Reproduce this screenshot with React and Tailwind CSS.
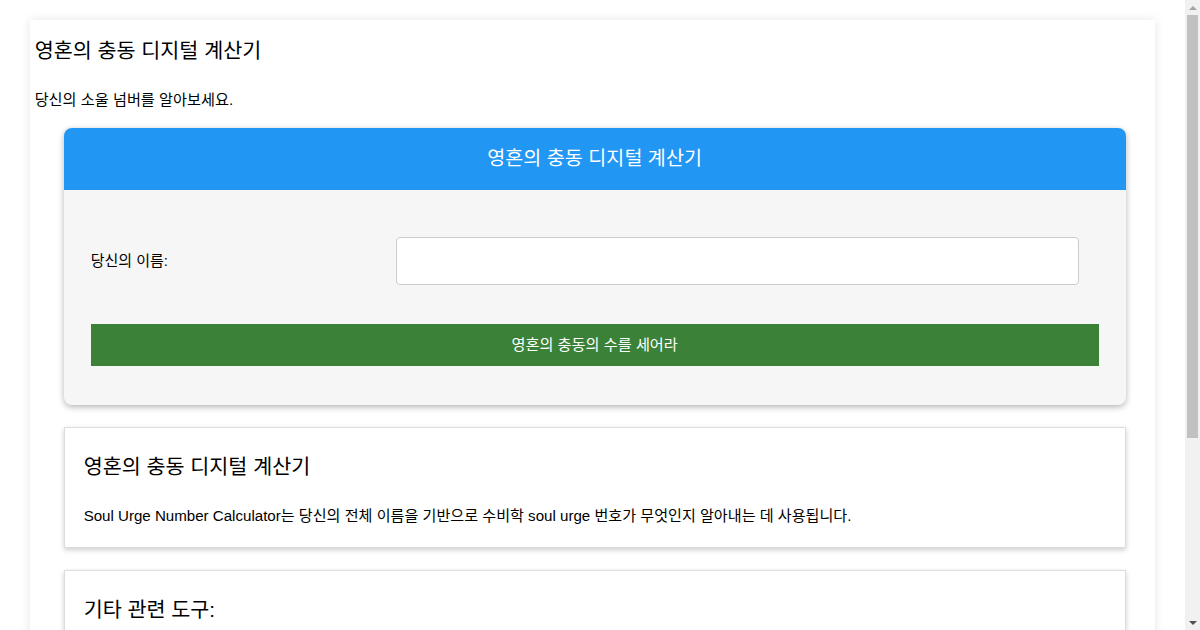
export default function App() {
  return (
    <div className="flex h-screen overflow-hidden bg-white" style={{ fontFamily: '"Liberation Sans", "Noto Sans CJK KR", sans-serif' }}>
      <div className="flex-1 min-w-0 h-screen overflow-hidden">
        <div className="pt-5 pb-10">
          <div className="w-[95%] mx-auto bg-white shadow-[0_0_10px_rgba(0,0,0,0.1)] px-[5px] pb-10 text-black">
            <h1 className="text-[20.7px] leading-[24px] pt-[19px] mb-[28px]">영혼의 충동 디지털 계산기</h1>
            <p className="text-[15.2px] leading-[18px] mb-[19px]">당신의 소울 넘버를 알아보세요.</p>

            <div className="ml-[29px] w-[1062px] rounded-lg overflow-hidden shadow-[0_2px_6px_rgba(0,0,0,0.3)] bg-[#f6f6f6]">
              <div className="bg-[#2196f3] h-[62px] flex items-center justify-center text-white text-[19.6px]">
                영혼의 충동 디지털 계산기
              </div>
              <div className="px-[27px] pt-[47px] pb-[39px]">
                <div className="flex items-center">
                  <label className="w-[305px] text-[15px]">당신의 이름:</label>
                  <input className="w-[683px] h-[48px] bg-white border border-[#ccc] rounded-[4px] px-3" />
                </div>
                <button className="mt-[39px] w-full h-[42px] bg-[#3b8238] text-white text-[15.2px]">
                  영혼의 충동의 수를 세어라
                </button>
              </div>
            </div>

            <div className="ml-[29px] w-[1062px] mt-[22px] bg-white border border-[#ddd] shadow-[0_2px_5px_rgba(0,0,0,0.2)] px-[19px] pt-[26px] pb-[22px]">
              <h2 className="text-[20.7px] leading-[26px] mb-[27px]">영혼의 충동 디지털 계산기</h2>
              <p className="text-[15.1px] leading-[18px]">
                Soul Urge Number Calculator는 당신의 전체 이름을 기반으로 수비학 soul urge 번호가 무엇인지 알아내는 데 사용됩니다.
              </p>
            </div>

            <div className="ml-[29px] w-[1062px] mt-[22px] bg-white border border-[#ddd] shadow-[0_2px_5px_rgba(0,0,0,0.2)] px-[19px] pt-[26px] pb-[24px]">
              <h2 className="text-[20.7px] leading-[26px] mb-[20px]">기타 관련 도구:</h2>
              <ul className="list-disc pl-6 text-[15px] leading-[28px]">
                <li>생명 경로 번호 계산기</li>
                <li>운명 번호 계산기</li>
                <li>성격 번호 계산기</li>
              </ul>
            </div>
          </div>
        </div>
      </div>

      {/* scrollbar */}
      <div className="w-[15px] h-screen bg-[#f1f1f1] flex flex-col items-center">
        <div className="h-[15px] flex items-center justify-center">
          <div className="w-0 h-0 border-l-[4px] border-r-[4px] border-b-[4px] border-l-transparent border-r-transparent border-b-[#a3a3a3]" />
        </div>
        <div className="w-[11px] h-[423px] bg-[#c1c1c1]" />
        <div className="flex-1" />
        <div className="h-[15px] flex items-center justify-center">
          <div className="w-0 h-0 border-l-[4px] border-r-[4px] border-t-[4px] border-l-transparent border-r-transparent border-t-[#505050]" />
        </div>
      </div>
    </div>
  )
}
